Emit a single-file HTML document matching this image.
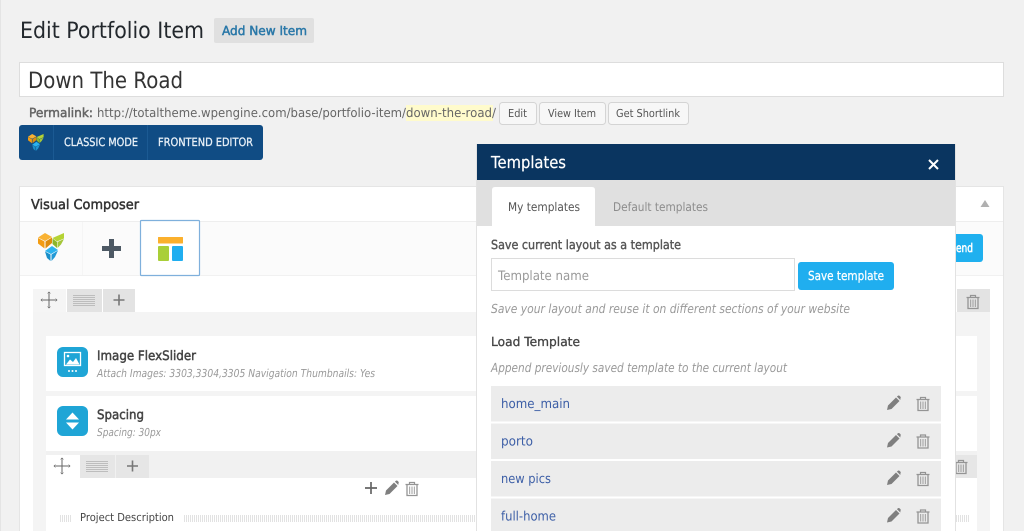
<!DOCTYPE html>
<html lang="en"><head><meta charset="utf-8"><title>Edit Portfolio Item</title>
<style>
html,body{margin:0;padding:0;background:#f1f1f1;width:1024px;height:531px;overflow:hidden}
svg{display:block;filter:blur(.35px)}
text{font-family:"DejaVu Sans","Liberation Sans",sans-serif;text-rendering:geometricPrecision}
.b{fill:currentColor;stroke:currentColor;stroke-width:.5px}
.i{font-style:italic;fill:#999}
</style></head><body>
<svg width="1024" height="531" viewBox="0 0 1024 531" xmlns="http://www.w3.org/2000/svg">
<defs>
<g id="logo">
<polygon points="38,237.500 45,233 52,237 45,241" fill="#f9b233"/>
<polygon points="38,238 44.500,241.500 44.500,248.500 38,243.500" fill="#f39c12"/>
<polygon points="45.500,241.500 52,237.500 52,243 45.500,248.500" fill="#dd8c0c"/>
<polygon points="52.500,238 64,233 64,238.500 57,241.500" fill="#b5d334"/>
<polygon points="52.500,238.500 57,242 57,248 52.500,244" fill="#8cb52b"/>
<polygon points="57.500,242 64,239 61,244.500 57.500,248" fill="#a4c639"/>
<polygon points="45,251 52,246 58,250 51,254" fill="#2bb3ee"/>
<polygon points="45,251.500 50.500,254.500 50.500,261 47,258" fill="#1a8fc9"/>
<polygon points="51.500,254.500 58,250.500 55,257 51.500,261" fill="#2199d6"/>
</g>
<g id="trash" fill="none" stroke="#949494" stroke-width="1.200">
<path d="M-6.500,-4.500H6.500M-2.500,-4.500V-6.500H2.500V-4.500"/>
<path d="M-5,-4V6.500H5V-4" stroke-width="1.300"/>
<path d="M-2.300,-2.500V5M0,-2.500V5M2.300,-2.500V5" stroke-width=".9"/>
</g>
<g id="pencil">
<path d="M-6.500,7 L-5.500,2.500 L2.500,-5.500 L6,-2 L-2,6 Z" fill="#7f7f7f"/>
<path d="M3.400,-6.400 L4.600,-7.400 Q5.300,-7.800 6,-7.200 L7,-6.200 Q7.600,-5.400 7,-4.600 L6.800,-3 Z" fill="#7f7f7f"/>
</g>
<g id="move" fill="none" stroke="#666" stroke-width="1">
<path d="M-6,0H6M0,-6V6"/>
<path d="M-6.500,-1.800L-8.500,0L-6.500,1.800ZM6.500,-1.800L8.500,0L6.500,1.800ZM-1.800,-6.500L0,-8.500L1.800,-6.500ZM-1.800,6.500L0,8.500L1.800,6.500Z" fill="#666" stroke="none"/>
</g>
<g id="lines" stroke="#bdbdbd" stroke-width="1">
<path d="M-11,-4.500H11M-11,-2.500H11M-11,-.5H11M-11,1.500H11M-11,3.500H11M-11,5.500H11"/>
</g>
<path id="plus" d="M-5.500,0H5.500M0,-5.500V5.500" stroke="#777" stroke-width="1.600" fill="none"/>
<pattern id="dots" width="2" height="7" patternUnits="userSpaceOnUse"><rect width="1" height="7" fill="#e2e2e2"/></pattern>
</defs>

<rect width="1024" height="531" fill="#f1f1f1"/>
<rect x="0" y="0" width="1" height="531" fill="#e4e4e4"/>

<text x="20" y="38" font-size="22.500" fill="#23282d" textLength="184" lengthAdjust="spacingAndGlyphs">Edit Portfolio Item</text>
<rect x="214" y="18" width="100" height="25" rx="2" fill="#e0e0e0"/>
<text x="222" y="35" font-size="12.500" class="b" color="#2a78a8" textLength="85" lengthAdjust="spacingAndGlyphs">Add New Item</text>

<rect x="19.500" y="62.500" width="984" height="34" fill="#fff" stroke="#dddddd"/>
<text x="28" y="88" font-size="22.500" fill="#333" textLength="155" lengthAdjust="spacingAndGlyphs">Down The Road</text>

<rect x="406" y="105" width="87" height="16" fill="#fffbcc"/>
<text x="29" y="117" font-size="12.500" class="b" color="#666" textLength="64" lengthAdjust="spacingAndGlyphs">Permalink:</text>
<text x="97" y="117" font-size="12.500" fill="#666" textLength="309" lengthAdjust="spacingAndGlyphs">http://totaltheme.wpengine.com/base/portfolio-item/</text>
<text x="406" y="117" font-size="12.500" fill="#666" textLength="90" lengthAdjust="spacingAndGlyphs">down-the-road/</text>

<g fill="#f7f7f7" stroke="#d4d4d4">
<rect x="499.500" y="102.500" width="37" height="22" rx="3"/>
<rect x="539.500" y="102.500" width="66" height="22" rx="3"/>
<rect x="608.500" y="102.500" width="80" height="22" rx="3"/>
</g>
<g font-size="11" fill="#555">
<text x="508" y="117" textLength="19" lengthAdjust="spacingAndGlyphs">Edit</text>
<text x="548" y="117" textLength="48" lengthAdjust="spacingAndGlyphs">View Item</text>
<text x="616" y="117" textLength="64" lengthAdjust="spacingAndGlyphs">Get Shortlink</text>
</g>

<rect x="19" y="125" width="244" height="35" rx="3" fill="#104c84"/>
<rect x="53" y="125" width="1" height="35" fill="#1b5a93"/>
<rect x="147" y="125" width="1" height="35" fill="#1b5a93"/>
<use href="#logo" transform="translate(5.200,-5.800) scale(.6)"/>
<g font-size="11.500" class="b" color="#e8f0f7" style="stroke-width:.3px">
<text x="64" y="146" textLength="74" lengthAdjust="spacingAndGlyphs">CLASSIC MODE</text>
<text x="158" y="146" textLength="95" lengthAdjust="spacingAndGlyphs">FRONTEND EDITOR</text>
</g>

<!-- VC panel -->
<rect x="19.500" y="186.500" width="984" height="350" fill="#fff" stroke="#e5e5e5"/>
<text x="31" y="209" font-size="13.500" class="b" color="#333" textLength="108" lengthAdjust="spacingAndGlyphs">Visual Composer</text>
<rect x="20" y="221" width="983" height="1" fill="#eeeeee"/>
<rect x="20" y="222" width="983" height="53" fill="#fbfbfb"/>
<rect x="20" y="275" width="983" height="1" fill="#f1f1f1"/>
<rect x="82" y="222" width="1" height="53" fill="#f5f5f5"/>
<use href="#logo"/>
<path d="M111.500,239V258M102,248.500H121" stroke="#4d5964" stroke-width="5" fill="none"/>
<rect x="140.500" y="220.500" width="59" height="55" rx="1" fill="#fff" stroke="#7fb0dc" stroke-width="1.200"/>
<rect x="158" y="237" width="25" height="6.500" rx=".5" fill="#fbb02d"/>
<rect x="158" y="246" width="11" height="15" rx="1" fill="#a9cf38"/>
<rect x="172" y="246" width="11" height="15" rx="1" fill="#20aef0"/>
<path d="M985,200L989.500,207H980.500Z" fill="#b0b0b0"/>
<rect x="900" y="234" width="83" height="28" rx="3" fill="#1fb0ef"/>
<text x="956" y="252" font-size="12" class="b" color="#fff" textLength="17" lengthAdjust="spacingAndGlyphs">end</text>

<!-- Row -->
<rect x="33" y="289" width="33" height="23" fill="#f5f5f5"/>
<rect x="67" y="289" width="35" height="23" fill="#e3e3e3"/>
<rect x="103" y="289" width="32" height="23" fill="#e3e3e3"/>
<use href="#move" x="49" y="300"/>
<use href="#lines" x="84" y="300"/>
<use href="#plus" x="119" y="300"/>
<rect x="33" y="312" width="957" height="219" fill="#f4f4f4"/>
<rect x="957" y="289" width="33" height="23" fill="#e3e3e3"/>
<use href="#trash" x="973" y="302"/>

<rect x="46" y="336" width="931" height="55" fill="#fff"/>
<rect x="46" y="396" width="931" height="55" fill="#fff"/>
<rect x="57" y="347" width="31" height="30" rx="6" fill="#1fa5d6"/>
<g fill="none" stroke="#fff" stroke-width="1.300">
<rect x="64.500" y="352.500" width="16" height="13"/>
</g>
<path d="M66,364.500L70,359.500L73,362L76,358L79.500,364.500Z" fill="#fff"/>
<circle cx="68" cy="356" r="1.300" fill="#fff"/>
<circle cx="69" cy="371" r="1" fill="#fff"/><circle cx="72.500" cy="371" r="1" fill="#fff"/><circle cx="76" cy="371" r="1" fill="#fff"/>
<text x="97" y="360" font-size="13" class="b" color="#444" textLength="99" lengthAdjust="spacingAndGlyphs">Image FlexSlider</text>
<text x="97" y="377" font-size="11" class="i" textLength="278" lengthAdjust="spacingAndGlyphs">Attach Images: 3303,3304,3305  Navigation Thumbnails: Yes</text>

<rect x="57" y="406" width="31" height="30" rx="6" fill="#1fa5d6"/>
<path d="M72.500,412.500L79,419.500H66ZM66,422.500H79L72.500,429.500Z" fill="#fff"/>
<text x="97" y="419" font-size="13" class="b" color="#444" textLength="47" lengthAdjust="spacingAndGlyphs">Spacing</text>
<text x="97" y="436" font-size="11" class="i" textLength="64" lengthAdjust="spacingAndGlyphs">Spacing: 30px</text>

<!-- Nested row -->
<rect x="46" y="451" width="931" height="80" fill="#fff"/>
<rect x="46" y="451" width="931" height="27" fill="#f1f1f1"/>
<rect x="46" y="455" width="34" height="23" fill="#fff"/>
<rect x="80" y="455" width="35" height="23" fill="#e6e6e6"/>
<rect x="116" y="455" width="33" height="23" fill="#e6e6e6"/>
<use href="#move" x="62" y="466"/>
<use href="#lines" x="97" y="466"/>
<use href="#plus" x="132.500" y="466"/>
<rect x="947" y="455" width="30" height="23" fill="#e6e6e6"/>
<use href="#trash" x="961" y="467"/>
<path d="M365,488H377M371,482V494" stroke="#666" stroke-width="1.700" fill="none"/>
<use href="#pencil" x="391.500" y="488"/>
<use href="#trash" x="412" y="489"/>
<rect x="60" y="515" width="12" height="7" fill="url(#dots)"/>
<rect x="183" y="515" width="295" height="7" fill="url(#dots)"/>
<rect x="955" y="515" width="14" height="7" fill="url(#dots)"/>
<text x="80" y="521" font-size="11" fill="#444" textLength="94" lengthAdjust="spacingAndGlyphs">Project Description</text>

<!-- Modal -->
<rect x="476" y="144" width="480" height="387" fill="#e2e2e2"/>
<rect x="477" y="144" width="478" height="387" fill="#fff"/>
<rect x="477" y="144" width="478" height="36" fill="#0a3560"/>
<text x="491" y="168" font-size="16.500" class="b" color="#fff" style="stroke-width:.2px" textLength="75" lengthAdjust="spacingAndGlyphs">Templates</text>
<path d="M929,160L938,169M938,160L929,169" stroke="#fff" stroke-width="2" fill="none"/>
<rect x="477" y="180" width="478" height="46" fill="#e0e0e0"/>
<path d="M492,226V190Q492,187 495,187H592Q595,187 595,190V226Z" fill="#fff"/>
<text x="508" y="211" font-size="12" fill="#555" textLength="72" lengthAdjust="spacingAndGlyphs">My templates</text>
<text x="613" y="211" font-size="12" fill="#8c8c8c" textLength="95" lengthAdjust="spacingAndGlyphs">Default templates</text>
<text x="491" y="249" font-size="12.500" class="b" color="#555" style="stroke-width:.4px" textLength="190" lengthAdjust="spacingAndGlyphs">Save current layout as a template</text>
<rect x="491.500" y="258.500" width="303" height="32" fill="#fff" stroke="#dcdcdc"/>
<text x="498" y="280" font-size="13" fill="#999" textLength="91" lengthAdjust="spacingAndGlyphs">Template name</text>
<rect x="798" y="262" width="96" height="28" rx="3" fill="#20aeef"/>
<text x="808" y="280" font-size="12.500" class="b" color="#fff" style="stroke-width:.25px" textLength="76" lengthAdjust="spacingAndGlyphs">Save template</text>
<text x="491" y="313" font-size="12.500" class="i" textLength="359" lengthAdjust="spacingAndGlyphs">Save your layout and reuse it on different sections of your website</text>
<text x="491" y="346" font-size="12.500" class="b" color="#444" style="stroke-width:.3px" textLength="89" lengthAdjust="spacingAndGlyphs">Load Template</text>
<text x="491" y="372" font-size="12.500" class="i" textLength="296" lengthAdjust="spacingAndGlyphs">Append previously saved template to the current layout</text>

<g fill="#ececec">
<rect x="491" y="386" width="450" height="35.500"/>
<rect x="491" y="423.500" width="450" height="35.500"/>
<rect x="491" y="461" width="450" height="35.500"/>
<rect x="491" y="498.500" width="450" height="33"/>
</g>
<g font-size="13" fill="#3c5ea6">
<text x="501" y="408" textLength="69" lengthAdjust="spacingAndGlyphs">home_main</text>
<text x="501" y="445.500" textLength="32" lengthAdjust="spacingAndGlyphs">porto</text>
<text x="501" y="483" textLength="50" lengthAdjust="spacingAndGlyphs">new pics</text>
<text x="501" y="520.500" textLength="55" lengthAdjust="spacingAndGlyphs">full-home</text>
</g>
<use href="#pencil" x="893.500" y="403"/><use href="#trash" x="923" y="404"/>
<use href="#pencil" x="893.500" y="440.500"/><use href="#trash" x="923" y="441.500"/>
<use href="#pencil" x="893.500" y="478"/><use href="#trash" x="923" y="479"/>
<use href="#pencil" x="893.500" y="515.500"/><use href="#trash" x="923" y="516.500"/>
</svg>
</body></html>
